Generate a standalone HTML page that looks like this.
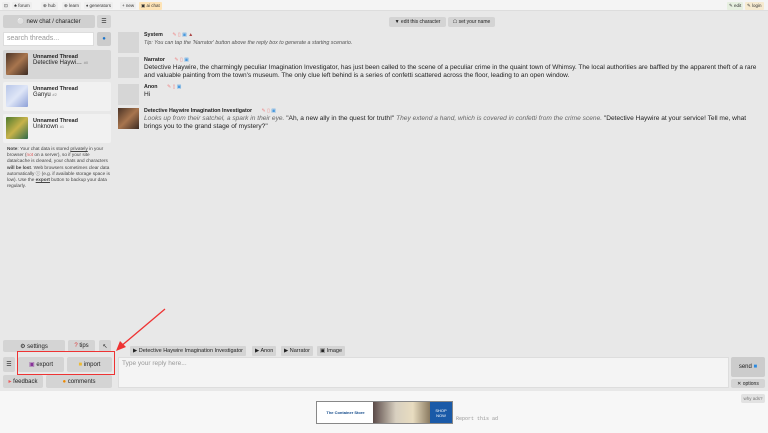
<!DOCTYPE html>
<html><head><style>
*{box-sizing:border-box;margin:0;padding:0}
body{width:768px;height:433px;overflow:hidden;background:#f7f7f7;font-family:"Liberation Sans",Arial,sans-serif;position:relative;color:#222}
.abs{position:absolute}
.btn{position:absolute;background:#d4d4d4;border-radius:2px;font-size:6px;display:flex;align-items:center;justify-content:center;color:#222}
.top{left:0;top:0;width:768px;height:11px;background:#f4f4f4;border-bottom:1px solid #ddd;font-size:4.5px;color:#333}
.top span{position:absolute;top:2px;padding:1px 2px;background:#eee;border-radius:1px}
.main{left:0;top:11px;width:768px;height:380px;background:#e8e8e8}
.thread{position:absolute;left:3px;width:108px;height:29px;background:#f1f1f1;border-radius:2px}
.thread.sel{background:#d6d6d6}
.av{position:absolute;left:3px;top:3px;width:22px;height:22px;border-radius:1px}
.tt{position:absolute;left:30px;top:4px;font-size:5.5px;font-weight:bold}
.ts{position:absolute;left:30px;top:10px;font-size:6px}
.ma{position:absolute;left:118px;width:21px;height:21px;background:#d6d6d6}
.mn{position:absolute;left:144px;font-size:5.3px;font-weight:bold}
.mt{position:absolute;left:144px;font-size:6.6px;line-height:8px;width:622px}
.ic{font-size:5px;color:#e88;margin-left:8px;font-weight:normal}
.tag{position:absolute;top:346px;height:10px;background:#d4d4d4;font-size:5.5px;padding:2px 3px;border-radius:1px}
</style></head><body>
<div class="abs top">
<span style="left:2px">⊡</span><span style="left:12px">♣ forum</span><span style="left:41px">⊕ hub</span><span style="left:62px">⊕ learn</span><span style="left:84px">♦ generators</span><span style="left:120px">+ new</span><span style="left:139px;background:#fde3b6">▣ ai chat</span>
<span style="left:727px;background:#e6efe0">✎ edit</span><span style="left:745px;background:#f6ead0">✎ login</span>
</div>
<div class="abs main"></div>
<div class="btn" style="left:3px;top:15px;width:92px;height:13px;background:#d0d0d0">⚪ new chat / character</div>
<div class="btn" style="left:97px;top:15px;width:14px;height:13px">☰</div>
<div class="abs" style="left:3px;top:32px;width:91px;height:14px;background:#fff;border:1px solid #ddd;font-size:7px;color:#999;padding:2px 3px">search threads...</div>
<div class="btn" style="left:97px;top:32px;width:14px;height:14px;background:#ccc;color:#1a73c9">●</div>
<div class="thread sel" style="top:50px"><div class="av" style="background:linear-gradient(135deg,#4a3326,#a8754e 50%,#3b2a22)"></div><div class="tt">Unnamed Thread</div><div class="ts">Detective Haywi… <span style="font-size:4px;color:#888">#0</span></div></div>
<div class="thread" style="top:82px"><div class="av" style="background:linear-gradient(135deg,#b8c6e8,#dfe6f7 50%,#8da0d8)"></div><div class="tt">Unnamed Thread</div><div class="ts">Ganyu <span style="font-size:4px;color:#888">#2</span></div></div>
<div class="thread" style="top:114px"><div class="av" style="background:linear-gradient(135deg,#4e7a2e,#c7b24a 50%,#2e6a4a)"></div><div class="tt">Unnamed Thread</div><div class="ts">Unknown <span style="font-size:4px;color:#888">#1</span></div></div>
<div class="abs" style="left:7px;top:146px;width:104px;font-size:4.7px;line-height:6.2px;color:#444"><b>Note</b>: Your chat data is stored <u>privately</u> in your browser (<span style="color:#d55">not</span> on a server), so if your site data/cache is cleared, your chats and characters <b>will be lost</b>. Web browsers sometimes clear data automatically ⓘ (e.g. if available storage space is low). Use the <b><u>export</u></b> button to backup your data regularly.</div>

<div class="btn" style="left:389px;top:17px;width:57px;height:10px;font-size:5px">▼ edit this character</div>
<div class="btn" style="left:448px;top:17px;width:47px;height:10px;font-size:5px">☖ set your name</div>

<div class="ma" style="top:32px"></div>
<div class="mn" style="top:32px">System <span class="ic">✎ ▯ <span style="color:#4a9be0">▣</span> <span style="color:#a44">▲</span></span></div>
<div class="mt" style="top:39px;font-style:italic;color:#555;font-size:5.3px">Tip: You can tap the 'Narrator' button above the reply box to generate a starting scenario.</div>
<div class="ma" style="top:57px"></div>
<div class="mn" style="top:57px">Narrator <span class="ic">✎ ▯ <span style="color:#4a9be0">▣</span></span></div>
<div class="mt" style="top:64px;font-size:6.5px">Detective Haywire, the charmingly peculiar Imagination Investigator, has just been called to the scene of a peculiar crime in the quaint town of Whimsy. The local authorities are baffled by the apparent theft of a rare and valuable painting from the town's museum. The only clue left behind is a series of confetti scattered across the floor, leading to an open window.</div>
<div class="ma" style="top:84px"></div>
<div class="mn" style="top:84px">Anon <span class="ic">✎ ▯ <span style="color:#4a9be0">▣</span></span></div>
<div class="mt" style="top:91px">Hi</div>
<div class="ma" style="top:108px;background:linear-gradient(135deg,#4a3326,#a8754e 50%,#3b2a22)"></div>
<div class="mn" style="top:108px">Detective Haywire Imagination Investigator <span class="ic">✎ ▯ <span style="color:#4a9be0">▣</span></span></div>
<div class="mt" style="top:115px;width:620px"><i style="color:#666">Looks up from their satchel, a spark in their eye.</i> "Ah, a new ally in the quest for truth!" <i style="color:#666">They extend a hand, which is covered in confetti from the crime scene.</i> "Detective Haywire at your service! Tell me, what brings you to the grand stage of mystery?"</div>

<div class="btn" style="left:3px;top:340px;width:62px;height:12px">⚙ settings</div>
<div class="btn" style="left:68px;top:340px;width:27px;height:12px"><span style="color:#d33">?</span>&nbsp;tips</div>
<div class="btn" style="left:99px;top:340px;width:12px;height:12px">↖</div>
<div class="btn" style="left:3px;top:357px;width:12px;height:15px">☰</div>
<div class="btn" style="left:18px;top:357px;width:46px;height:15px"><span style="color:#839">▣</span>&nbsp;export</div>
<div class="btn" style="left:67px;top:357px;width:45px;height:15px"><span style="color:#eb3">■</span>&nbsp;import</div>
<div class="abs" style="left:17px;top:351px;width:98px;height:24px;border:1.5px solid #e33"></div>
<div class="btn" style="left:3px;top:375px;width:40px;height:13px"><span style="color:#e55">▸</span>&nbsp;feedback</div>
<div class="btn" style="left:46px;top:375px;width:66px;height:13px"><span style="color:#e80">●</span>&nbsp;comments</div>
<svg class="abs" style="left:110px;top:305px" width="60" height="50"><line x1="55" y1="4" x2="10" y2="42" stroke="#e33" stroke-width="1.3"/><polygon points="6,46 10,36 16,42" fill="#e33"/></svg>

<div class="tag" style="left:130px">▶ Detective Haywire Imagination Investigator</div>
<div class="tag" style="left:252px">▶ Anon</div>
<div class="tag" style="left:281px">▶ Narrator</div>
<div class="tag" style="left:317px">▣ Image</div>
<div class="abs" style="left:118px;top:357px;width:611px;height:31px;background:#f4f4f4;border:1px solid #ddd;font-size:6.5px;color:#999;padding:2px 3px">Type your reply here...</div>
<div class="btn" style="left:731px;top:357px;width:34px;height:20px;background:#ccc">send <span style="color:#2b8ae0">&nbsp;■</span></div>
<div class="btn" style="left:731px;top:379px;width:34px;height:9px;font-size:5px">✕ options</div>

<div class="btn" style="left:741px;top:394px;width:24px;height:9px;font-size:4.5px;background:#e2e2e2;color:#777">why ads?</div>
<div class="abs" style="left:316px;top:401px;width:137px;height:23px;border:1px solid #888;background:#fff"></div>
<div class="abs" style="left:318px;top:410px;width:55px;font-size:4px;color:#124a8a;font-weight:bold;text-align:center">The Container Store</div>
<div class="abs" style="left:373px;top:402px;width:57px;height:21px;background:linear-gradient(90deg,#5a4a48,#d8d0c0 40%,#e8dcc0 70%,#8a7a60)"></div>
<div class="abs" style="left:430px;top:402px;width:22px;height:21px;background:#1a5aa8;color:#fff;font-size:4px;text-align:center;padding-top:6px">SHOP<br>NOW</div>
<div class="abs" style="left:456px;top:416px;font-family:'Liberation Mono',monospace;font-size:5px;color:#999">Report this ad</div>
</body></html>
